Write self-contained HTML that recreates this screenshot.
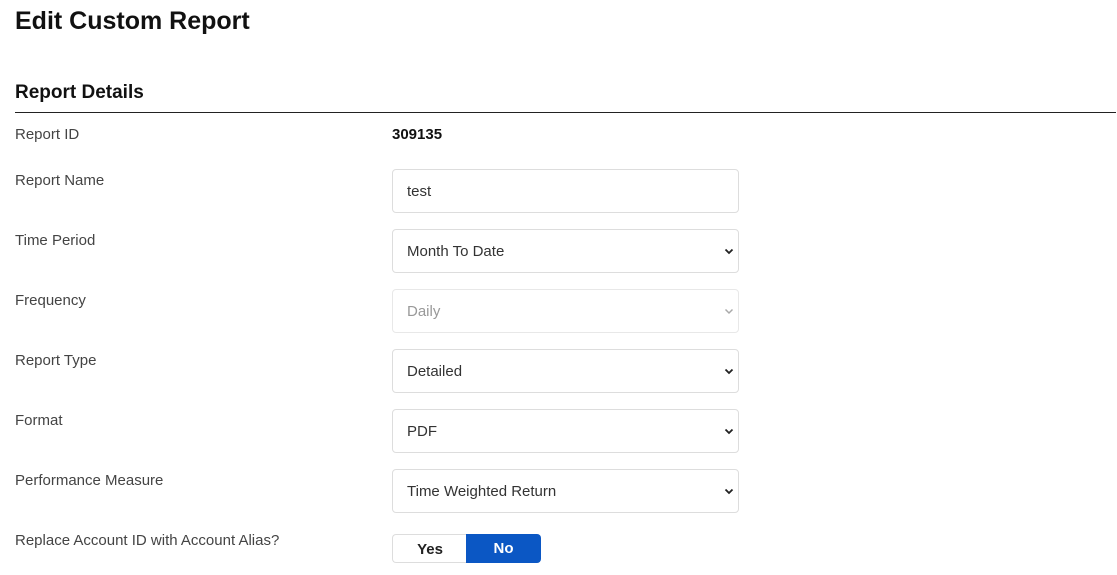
<!DOCTYPE html><html><head><style>
body{margin:0;background:#fff;font-family:"Liberation Sans",sans-serif;color:#333;}
h1{position:absolute;left:15px;top:7px;margin:0;font-size:25px;font-weight:600;color:#111;}
h2{position:absolute;left:15px;top:82px;margin:0;font-size:19px;font-weight:600;color:#111;}
.hr{position:absolute;left:15px;top:112px;width:1101px;height:1px;background:#222;}
.lbl{position:absolute;left:15px;font-size:15px;color:#444;}
.val{position:absolute;left:392px;top:126px;font-size:15px;font-weight:bold;color:#111;}
.box{position:absolute;left:392px;width:345px;height:42px;border:1px solid #ddd;border-radius:4px;box-sizing:content-box;}
.box span{position:absolute;left:14px;top:13px;font-size:15px;color:#333;}
.box svg{position:absolute;right:4px;top:16px;}
.dis span{color:#999}
.tg{position:absolute;top:534px;height:29px;font-size:15px;font-weight:bold;text-align:center;line-height:29px;box-sizing:border-box;}
</style></head><body>
<h1>Edit Custom Report</h1>
<h2>Report Details</h2>
<div class="hr"></div>
<div class="lbl" style="top:126px">Report ID</div><div class="val">309135</div>
<div class="lbl" style="top:172px">Report Name</div>
<div class="box" style="top:169px"><span>test</span></div>
<div class="lbl" style="top:232px">Time Period</div>
<div class="box" style="top:229px"><span>Month To Date</span><svg width="10" height="10" viewBox="0 0 10 10"><path d="M1.5 3.5L5 7 8.5 3.5" fill="none" stroke="#222" stroke-width="1.8"/></svg></div>
<div class="lbl" style="top:292px">Frequency</div>
<div class="box dis" style="top:289px;border-color:#e8e8e8"><span>Daily</span><svg width="10" height="10" viewBox="0 0 10 10"><path d="M1.5 3.5L5 7 8.5 3.5" fill="none" stroke="#aaa" stroke-width="1.5"/></svg></div>
<div class="lbl" style="top:352px">Report Type</div>
<div class="box" style="top:349px"><span>Detailed</span><svg width="10" height="10" viewBox="0 0 10 10"><path d="M1.5 3.5L5 7 8.5 3.5" fill="none" stroke="#222" stroke-width="1.8"/></svg></div>
<div class="lbl" style="top:412px">Format</div>
<div class="box" style="top:409px"><span>PDF</span><svg width="10" height="10" viewBox="0 0 10 10"><path d="M1.5 3.5L5 7 8.5 3.5" fill="none" stroke="#222" stroke-width="1.8"/></svg></div>
<div class="lbl" style="top:472px">Performance Measure</div>
<div class="box" style="top:469px"><span>Time Weighted Return</span><svg width="10" height="10" viewBox="0 0 10 10"><path d="M1.5 3.5L5 7 8.5 3.5" fill="none" stroke="#222" stroke-width="1.8"/></svg></div>
<div class="lbl" style="top:532px">Replace Account ID with Account Alias?</div>
<div class="tg" style="left:392px;width:75px;border:1px solid #ddd;border-right:none;border-radius:4px 0 0 4px;color:#222">Yes</div>
<div class="tg" style="left:466px;width:75px;background:#0b57c4;color:#fff;border-radius:0 4px 4px 0">No</div>
</body></html>
